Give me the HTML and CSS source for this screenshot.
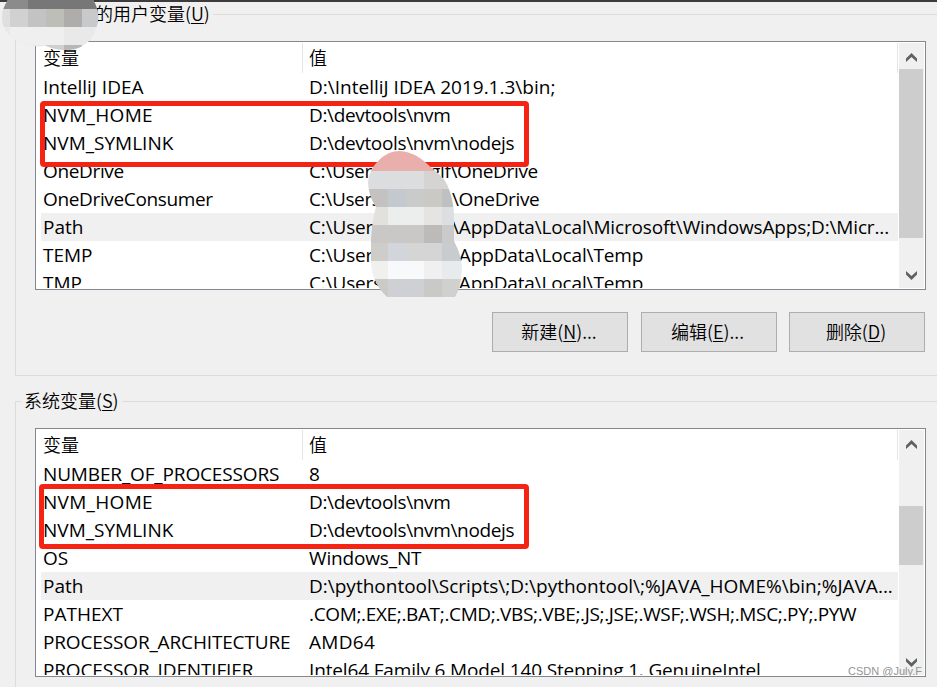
FILE: index.html
```
<!DOCTYPE html>
<html lang="zh-CN">

<head>
    <meta charset="UTF-8">
    <meta name="viewport" content="width=device-width, initial-scale=1.0">
    <title>环境变量</title>
    <link rel="stylesheet" href="styles.css">
</head>

<body>
    <div class="dialog">
        <div class="title-strip"></div>

        <section class="group user-group">
            <h2 class="legend">的用户变量(<u>U</u>)</h2>
            <div class="list">
                <div class="table">
                    <div class="head"><span>变量</span><span>值</span></div>
                    <div class="row"><span class="name">IntelliJ IDEA</span><span class="value">D:\IntelliJ IDEA 2019.1.3\bin;</span></div>
                    <div class="row"><span class="name wide">NVM_HOME</span><span class="value tight">D:\devtools\nvm</span></div>
                    <div class="row"><span class="name">NVM_SYMLINK</span><span class="value tight">D:\devtools\nvm\nodejs</span></div>
                    <div class="row"><span class="name tight">OneDrive</span><span class="value tight"><span class="home short">C:\Users</span>glf\OneDrive</span></div>
                    <div class="row"><span class="name tight">OneDriveConsumer</span><span class="value tight"><span class="home">C:\Users</span>\OneDrive</span></div>
                    <div class="row selected"><span class="name">Path</span><span class="value slim"><span class="home">C:\Users</span>\AppData\Local\Microsoft\WindowsApps;D:\Micr...</span></div>
                    <div class="row"><span class="name">TEMP</span><span class="value slim"><span class="home">C:\Users</span>\AppData\Local\Temp</span></div>
                    <div class="row"><span class="name">TMP</span><span class="value slim"><span class="home">C:\Users</span>\AppData\Local\Temp</span></div>
                </div>
                <div class="scrollbar">
                    <svg class="arrow" viewBox="0 0 11 9"><path d="M5.5 0 11 5.5V9L5.5 4 0 9V5.5z"/></svg>
                    <div class="thumb"></div>
                    <svg class="arrow down" viewBox="0 0 11 9"><path d="M5.5 9 11 3.5V0L5.5 5 0 0v3.5z"/></svg>
                </div>
                <div class="highlight"></div>
            </div>
            <div class="buttons">
                <button>新建(<u>N</u>)...</button>
                <button>编辑(<u>E</u>)...</button>
                <button>删除(<u>D</u>)</button>
            </div>
        </section>

        <section class="group system-group">
            <h2 class="legend">系统变量(<u>S</u>)</h2>
            <div class="list">
                <div class="table">
                    <div class="head"><span>变量</span><span>值</span></div>
                    <div class="row"><span class="name slim">NUMBER_OF_PROCESSORS</span><span class="value">8</span></div>
                    <div class="row"><span class="name wide">NVM_HOME</span><span class="value tight">D:\devtools\nvm</span></div>
                    <div class="row"><span class="name">NVM_SYMLINK</span><span class="value tight">D:\devtools\nvm\nodejs</span></div>
                    <div class="row"><span class="name">OS</span><span class="value slim">Windows_NT</span></div>
                    <div class="row selected"><span class="name">Path</span><span class="value">D:\pythontool\Scripts\;D:\pythontool\;%JAVA_HOME%\bin;%JAVA...</span></div>
                    <div class="row"><span class="name">PATHEXT</span><span class="value tight">.COM;.EXE;.BAT;.CMD;.VBS;.VBE;.JS;.JSE;.WSF;.WSH;.MSC;.PY;.PYW</span></div>
                    <div class="row"><span class="name slim">PROCESSOR_ARCHITECTURE</span><span class="value wide">AMD64</span></div>
                    <div class="row"><span class="name slim">PROCESSOR_IDENTIFIER</span><span class="value slim">Intel64 Family 6 Model 140 Stepping 1, GenuineIntel</span></div>
                </div>
                <div class="scrollbar">
                    <svg class="arrow" viewBox="0 0 11 9"><path d="M5.5 0 11 5.5V9L5.5 4 0 9V5.5z"/></svg>
                    <div class="thumb"></div>
                    <svg class="arrow down" viewBox="0 0 11 9"><path d="M5.5 9 11 3.5V0L5.5 5 0 0v3.5z"/></svg>
                </div>
                <div class="highlight"></div>
            </div>
        </section>

        <!-- Mosaics over the account name -->
        <svg class="mosaic" viewBox="0 0 937 687" shape-rendering="crispEdges">
            <clipPath id="nameBlob"><path d="M8 0H93Q98 7 98 17C98 32 89 50 66 50Q56 50 46 46C24 49 2 36 2 18Q2 8 8 0z"/></clipPath>
            <g clip-path="url(#nameBlob)">
                <path fill="#e9e9e9" d="M0 0h100v52H0z"/>
                <path fill="#8b8b8b" d="M0 0h28v9H0z"/>
                <path fill="#777" d="M28 0h72v9H28z"/>
                <path fill="#dfdfdf" d="M0 9h10v18H0z"/>
                <path fill="#d1d1d1" d="M10 9h18v18H10z"/>
                <path fill="#c3c3c3" d="M28 9h18v18H28z"/>
                <path fill="#bdbeb8" d="M46 9h18v18H46z"/>
                <path fill="#afadab" d="M64 9h18v18H64z"/>
                <path fill="#c7c9cb" d="M82 9h18v18H82z"/>
                <path fill="#efefef" d="M10 27h54v18H10z"/>
                <path fill="#cfcfcf" d="M46 45h18v7H46z"/>
                <path fill="#b7b7b8" d="M64 45h18v7H64z"/>
            </g>
            <clipPath id="pathBlob"><path d="M399 151C417 152 426 163 434 170Q446 178 450 192 454 204 454 217V241Q462 256 462 269 461 288 455 297H387Q372 283 371 262V240Q372 220 376 207 368 195 368 182C370 164 386 151 399 151z"/></clipPath>
            <g clip-path="url(#pathBlob)">
                <path fill="#e8afac" d="M368 151h96v20h-96z"/>
                <path fill="#dcddde" d="M368 171h56v18h-56z"/>
                <path fill="#d5d4d3" d="M424 171h40v18h-40z"/>
                <path fill="#c4c2c0" d="M368 189h20v18h-20z"/>
                <path fill="#c4c9cf" d="M388 189h18v18h-18z"/>
                <path fill="#c9caca" d="M406 189h18v18h-18z"/>
                <path fill="#cac9c4" d="M424 189h18v18h-18z"/>
                <path fill="#bdc1c1" d="M442 189h22v18h-22z"/>
                <path fill="#e3e1de" d="M368 207h20v18h-20z"/>
                <path fill="#eceded" d="M388 207h36v18h-36z"/>
                <path fill="#e5e4e2" d="M424 207h18v18h-18z"/>
                <path fill="#dbdfe2" d="M442 207h22v18h-22z"/>
                <path fill="#c9c8c6" d="M368 225h56v18h-56z"/>
                <path fill="#bdbbb9" d="M424 225h18v18h-18z"/>
                <path fill="#cbcaca" d="M442 225h22v18h-22z"/>
                <path fill="#cfcdc9" d="M368 243h20v18h-20z"/>
                <path fill="#d2d6dc" d="M388 243h18v18h-18z"/>
                <path fill="#d5d5d5" d="M406 243h36v18h-36z"/>
                <path fill="#c9cccf" d="M442 243h22v18h-22z"/>
                <path fill="#f0f0ee" d="M368 261h20v18h-20z"/>
                <path fill="#f8f9fa" d="M388 261h36v18h-36z"/>
                <path fill="#eff0ef" d="M424 261h18v18h-18z"/>
                <path fill="#e8ebed" d="M442 261h22v18h-22z"/>
                <path fill="#cbcac7" d="M368 279h20v18h-20z"/>
                <path fill="#ced0d3" d="M388 279h36v18h-36z"/>
                <path fill="#c9c9c8" d="M424 279h18v18h-18z"/>
                <path fill="#d0d0cf" d="M442 279h22v18h-22z"/>
            </g>
        </svg>
        <div class="watermark">CSDN @July.F</div>
    </div>
</body>

</html>
```
FILE: styles.css
```
* {
    box-sizing: border-box;
}

body {
    margin: 0;
    background-color: #f0f0f0;
    color: #000;
    font-family: 'Open Sans', 'Noto Sans CJK SC', sans-serif;
    font-size: 19px;
    overflow: hidden;
}

.dialog {
    position: relative;
    width: 937px;
    height: 687px;
    overflow: hidden;
}

.title-strip {
    height: 2px;
    background-color: #3d3b3b;
}

.group {
    width: 940px;
    margin-left: 15px;
    border: 1px solid #dcdcdc;
    padding: 0 0 0 19px;
}

.user-group {
    height: 362px;
    margin-top: 12px;
}

.system-group {
    height: 320px;
    margin-top: 25px;
}

.legend {
    width: fit-content;
    height: 26px;
    margin: -13px 0 0 -14px;
    padding: 0 3px 0 3px;
    background-color: #f0f0f0;
    font-family: 'Noto Sans CJK SC', sans-serif;
    font-size: 18px;
    font-weight: 350;
    line-height: 22px;
    white-space: nowrap;
}

.user-group .legend {
    margin-left: 57px;
}

u {
    text-underline-offset: 2px;
    text-decoration-thickness: 1px;
}

.list {
    position: relative;
    display: flex;
    width: 891px;
    height: 249px;
    margin-top: 13px;
    padding: 1px;
    border: 1px solid #828790;
    background-color: #fff;
}

.table {
    width: 862px;
    height: 245px;
    padding: 0 1px 0 4px;
    overflow: hidden;
}

.head {
    display: grid;
    grid-template-columns: 262px 595px;
    height: 30px;
    font-family: 'Noto Sans CJK SC', sans-serif;
    font-size: 18px;
    font-weight: 350;
    line-height: 29px;
}

.head span {
    padding-left: 2px;
    border-right: 1px solid #e5e5e5;
}

.head span + span {
    padding-left: 6px;
}

.row {
    display: grid;
    grid-template-columns: 266px 589px;
    height: 28px;
    padding-left: 2px;
    line-height: 28px;
    white-space: pre;
}

.selected {
    background-color: #f0f0f0;
}

.slim {
    letter-spacing: -0.15px;
}

.tight {
    letter-spacing: -0.35px;
}

.wide {
    letter-spacing: 0.3px;
}

.home {
    display: inline-block;
    width: 143px;
}

.home.short {
    width: 121px;
}

.scrollbar {
    display: flex;
    flex-direction: column;
    align-items: center;
    width: 25px;
    padding: 10px 1px 8px 0;
    background-color: #f0f0f0;
}

.arrow {
    width: 11px;
    height: 9px;
    fill: #606060;
}

.thumb {
    width: 24px;
    height: 169px;
    margin-top: 7px;
    background-color: #cdcdcd;
}

.system-group .thumb {
    height: 59px;
    margin-top: 57px;
}

.down {
    margin-top: auto;
}

/* Red frame around the NVM rows */
.highlight {
    position: absolute;
    top: 59px;
    left: 4px;
    width: 489px;
    height: 66px;
    border: 5px solid #f52314;
    border-radius: 4px;
}

.system-group .highlight {
    top: 55px;
    left: 3px;
    width: 490px;
    height: 65px;
}

.buttons {
    display: flex;
    justify-content: space-between;
    width: 433px;
    margin: 22px 0 0 457px;
}

button {
    width: 136px;
    height: 40px;
    padding: 0 2px 2px 0;
    border: 1px solid #adadad;
    background-color: #e1e1e1;
    font-family: 'Noto Sans CJK SC', sans-serif;
    font-size: 18px;
    font-weight: 350;
}

.mosaic {
    position: absolute;
    top: 0;
    left: 0;
    width: 937px;
    height: 687px;
}

.watermark {
    position: absolute;
    right: 15px;
    bottom: 9px;
    color: #949494;
    font-family: 'Liberation Sans', sans-serif;
    font-size: 11px;
    line-height: 14px;
}
```
